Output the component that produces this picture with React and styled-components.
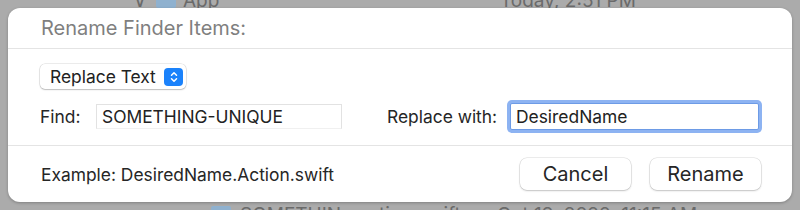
import React from 'react'
import styled, { createGlobalStyle } from 'styled-components'

const GlobalStyle = createGlobalStyle`
    html, body {
        margin: 0;
        padding: 0;
        width: 800px;
        height: 210px;
        overflow: hidden;
        background: #ababab;
        font-family: Inter, "Noto Sans", sans-serif;
    }
`;

const Screen = styled.div`
    position: relative;
    width: 800px;
    height: 210px;
    background: #ababab;
    overflow: hidden;
`;

const Backdrop = styled.div`
    display: flex;
    flex-direction: column;
    justify-content: space-between;
    height: 210px;
`;

const FinderRow = styled.div`
    display: flex;
    align-items: center;
    height: 22px;
    margin-top: ${props => props.top || '0'};
    margin-bottom: ${props => props.bottom || '0'};
    color: #6a6a6a;
    font-size: 19px;
    white-space: nowrap;
`;

const Cell = styled.div`
    width: ${props => props.width};
    padding-left: ${props => props.pad || '0px'};
    box-sizing: border-box;
    display: flex;
    align-items: center;
    gap: 9px;
    flex-shrink: 0;
    overflow: hidden;
`;

const Folder = styled.span`
    display: inline-block;
    width: 20px;
    height: 16px;
    background: #8fb1cf;
    border-radius: 2px;
    flex-shrink: 0;
`;

const Dialog = styled.div`
    position: absolute;
    left: 8px;
    top: 8px;
    width: 784px;
    height: 194px;
    background: #ffffff;
    border-radius: 12px;
    box-shadow: 0 1px 3px rgba(0, 0, 0, 0.25);
    display: flex;
    flex-direction: column;
`;

const Header = styled.div`
    height: 40px;
    padding-left: 33px;
    display: flex;
    align-items: center;
    font-size: 20px;
    color: #7f7f7f;
    border-bottom: 1px solid #e4e4e4;
`;

const Body = styled.div`
    height: 97px;
    padding: 15px 28px 0 32px;
    box-sizing: border-box;
    border-bottom: 1px solid #e4e4e4;
    display: flex;
    flex-direction: column;
    gap: 14px;
`;

const Popup = styled.div`
    display: flex;
    align-items: center;
    justify-content: space-between;
    width: 146px;
    height: 25px;
    box-sizing: border-box;
    padding: 0 3px 0 10px;
    border-radius: 5px;
    background: #ffffff;
    box-shadow: 0 0 0 0.5px rgba(0, 0, 0, 0.15), 0 1px 1.5px rgba(0, 0, 0, 0.2);
    font-size: 17.4px;
    color: #222222;
`;

const Stepper = styled.span`
    width: 19px;
    height: 18px;
    border-radius: 4px;
    background: #1b82fb;
    display: flex;
    align-items: center;
    justify-content: center;
`;

const FieldRow = styled.div`
    display: flex;
    align-items: center;
`;

const Label = styled.span`
    font-size: 17.4px;
    color: #262626;
    width: ${props => props.width};
    padding-left: ${props => props.pad || '0px'};
    flex-shrink: 0;
`;

const Field = styled.div`
    width: ${props => props.width};
    height: ${props => props.focused ? '27px' : '25px'};
    box-sizing: border-box;
    display: flex;
    align-items: center;
    padding-left: 5px;
    font-size: 17.4px;
    color: #222222;
    background: #ffffff;
    border: 1px solid ${props => props.focused ? '#6d9be6' : '#e2e2e2'};
    border-bottom-color: ${props => props.focused ? '#6d9be6' : '#f0f0f0'};
    box-shadow: ${props => props.focused ? '0 0 0 3px #8db3f2' : 'none'};
    border-radius: ${props => props.focused ? '2px' : '0'};
`;

const Footer = styled.div`
    flex: 1;
    display: flex;
    align-items: center;
    justify-content: space-between;
    padding: 0 31px 0 33px;
`;

const Example = styled.span`
    font-size: 17.4px;
    color: #262626;
`;

const Buttons = styled.div`
    display: flex;
    gap: 19px;
`;

const Button = styled.div`
    width: 111px;
    height: 32px;
    box-sizing: border-box;
    border-radius: 7px;
    background: #ffffff;
    box-shadow: 0 0 0 0.5px rgba(0, 0, 0, 0.14), 0 1px 2px rgba(0, 0, 0, 0.18);
    display: flex;
    align-items: center;
    justify-content: center;
    font-size: 20px;
    color: #262626;
`;

function App() {
    return (
        <Screen>
            <GlobalStyle />
            <Backdrop>
                <FinderRow top="-11px">
                    <Cell width="133px" />
                    <Cell width="367px">
                        <span>∨</span>
                        <Folder />
                        <span style={{ marginLeft: '-2px' }}>App</span>
                    </Cell>
                    <Cell width="300px">Today, 2:51 PM</Cell>
                </FinderRow>
                <FinderRow bottom="-15px">
                    <Cell width="205px" />
                    <Cell width="292px" pad="6px">
                        <Folder />
                        <span>SOMETHIN…action.swift</span>
                    </Cell>
                    <Cell width="300px">Oct 19, 2022, 11:15 AM</Cell>
                </FinderRow>
            </Backdrop>

            <Dialog>
                <Header>Rename Finder Items:</Header>
                <Body>
                    <Popup>
                        <span>Replace Text</span>
                        <Stepper>
                            <svg width="10" height="14" viewBox="0 0 10 14">
                                <path d="M2.5 5.2 L5 2.8 L7.5 5.2 M2.5 8.8 L5 11.2 L7.5 8.8"
                                    fill="none" stroke="#ffffff" strokeWidth="1.5"
                                    strokeLinecap="round" strokeLinejoin="round" />
                            </svg>
                        </Stepper>
                    </Popup>
                    <FieldRow>
                        <Label width="56px">Find:</Label>
                        <Field width="246px">SOMETHING-UNIQUE</Field>
                        <Label width="123px" pad="45px">Replace with:</Label>
                        <Field width="249px" focused>DesiredName</Field>
                    </FieldRow>
                </Body>
                <Footer>
                    <Example>Example: DesiredName.Action.swift</Example>
                    <Buttons>
                        <Button>Cancel</Button>
                        <Button>Rename</Button>
                    </Buttons>
                </Footer>
            </Dialog>
        </Screen>
    )
}

export default App
